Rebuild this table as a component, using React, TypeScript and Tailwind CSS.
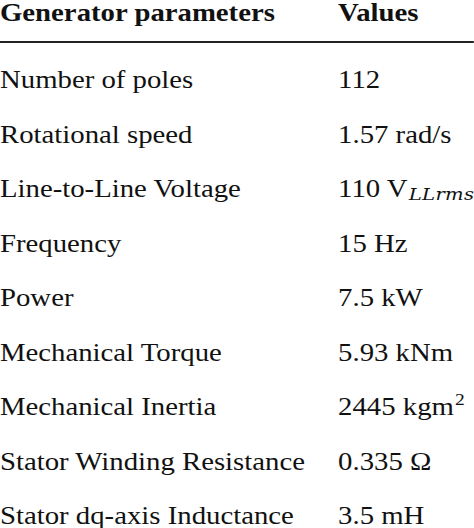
const rows: [string, React.ReactNode][] = [
  ["Number of poles", "112"],
  ["Rotational speed", "1.57 rad/s"],
  [
    "Line-to-Line Voltage",
    <>
      110 V
      <sub className="relative top-[3px] ml-[1px] align-baseline text-[17px] italic font-['DejaVu_Serif',serif] tracking-[0.3px]">
        LLrms
      </sub>
    </>,
  ],
  ["Frequency", "15 Hz"],
  ["Power", "7.5 kW"],
  ["Mechanical Torque", "5.93 kNm"],
  [
    "Mechanical Inertia",
    <>
      2445 kgm<sup className="relative -top-[10px] ml-[1px] align-baseline text-[17px]">2</sup>
    </>,
  ],
  ["Stator Winding Resistance", "0.335 Ω"],
  ["Stator dq-axis Inductance", "3.5 mH"],
];

export default function App() {
  return (
    <div className="w-[474px] h-[528px] overflow-hidden bg-white text-[#111] font-['Liberation_Serif',serif] text-[25px]">
      <div className="w-[412px] origin-left scale-x-[1.15]">
        <div className="grid grid-cols-[294px_1fr] font-bold leading-none">
          <span>Generator parameters</span>
          <span>Values</span>
        </div>
        <div className="mt-[16px] h-[2px] bg-[#222]" />
        <div className="mt-[10px]">
          {rows.map(([name, value]) => (
            <div key={name} className="grid grid-cols-[294px_1fr] h-[54.5px] leading-[54.5px] whitespace-nowrap">
              <span>{name}</span>
              <span>{value}</span>
            </div>
          ))}
        </div>
      </div>
    </div>
  );
}
